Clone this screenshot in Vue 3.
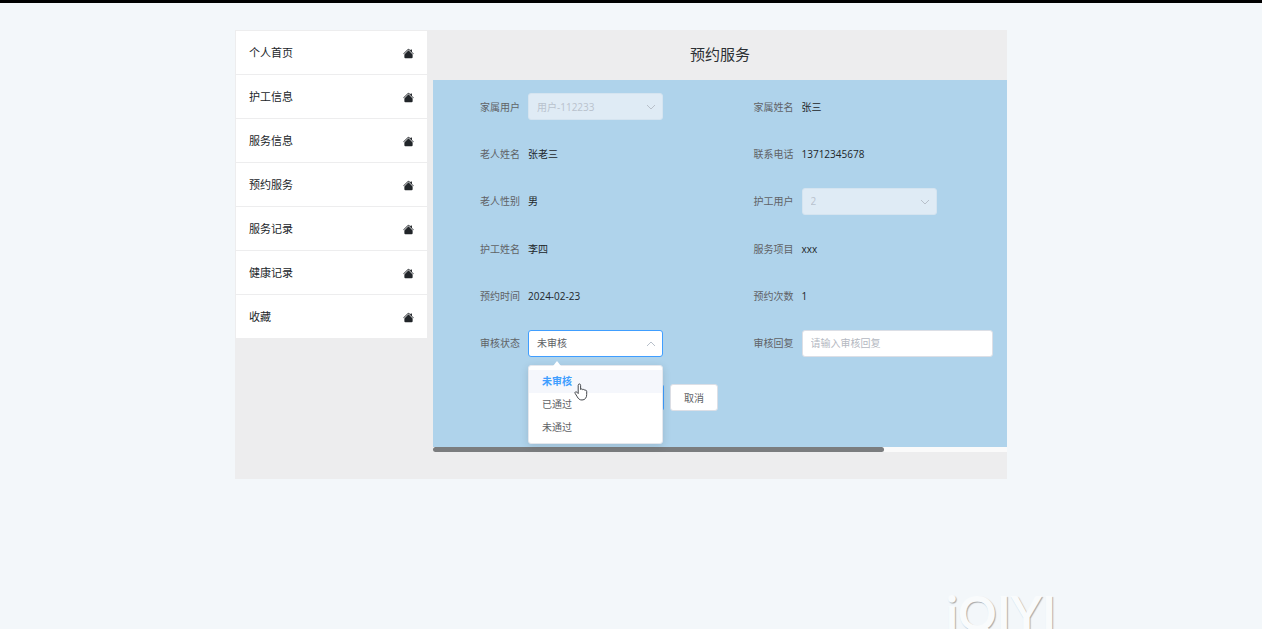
<script setup>
import { ref } from 'vue'

const menu = ['个人首页', '护工信息', '服务信息', '预约服务', '服务记录', '健康记录', '收藏']

const fields = [
  { id: 'family-user', label: '家属用户', type: 'locked', value: '用户-112233' },
  { id: 'family-name', label: '家属姓名', type: 'text', value: '张三' },
  { id: 'elder-name', label: '老人姓名', type: 'text', value: '张老三' },
  { id: 'phone', label: '联系电话', type: 'text', value: '13712345678' },
  { id: 'elder-sex', label: '老人性别', type: 'text', value: '男' },
  { id: 'nurse-user', label: '护工用户', type: 'locked', value: '2' },
  { id: 'nurse-name', label: '护工姓名', type: 'text', value: '李四' },
  { id: 'project', label: '服务项目', type: 'text', value: 'xxx' },
  { id: 'date', label: '预约时间', type: 'text', value: '2024-02-23' },
  { id: 'times', label: '预约次数', type: 'text', value: '1' },
  { id: 'status', label: '审核状态', type: 'status' },
  { id: 'reply', label: '审核回复', type: 'input' }
]

const options = ['未审核', '已通过', '未通过']
const status = ref('未审核')
const reply = ref('')
const open = ref(true)

function choose(option) {
  status.value = option
  open.value = false
}
</script>

<template>
  <div class="page">
    <div class="shell">
      <nav class="side">
        <a v-for="item in menu" :key="item" href="#" class="side-item">
          <span>{{ item }}</span>
          <svg class="house" viewBox="0 0 16 16" aria-hidden="true">
            <path d="M8.707 1.5a1 1 0 0 0-1.414 0L.646 8.146a.5.5 0 0 0 .708.708L8 2.207l6.646 6.647a.5.5 0 0 0 .708-.708L13 5.793V2.5a.5.5 0 0 0-.5-.5h-1a.5.5 0 0 0-.5.5v1.293L8.707 1.5Z" />
            <path d="m8 3.293 6 6V13.5a1.5 1.5 0 0 1-1.5 1.5h-9A1.5 1.5 0 0 1 2 13.5V9.293l6-6Z" />
          </svg>
        </a>
      </nav>

      <main class="main">
        <h1 class="title">预约服务</h1>
        <form class="form" @submit.prevent>
          <div class="fields">
            <div v-for="f in fields" :key="f.id" class="field">
              <label class="label" :for="f.id">{{ f.label }}</label>

              <div v-if="f.type === 'locked'" class="select-box">
                <select :id="f.id" class="control locked" disabled>
                  <option>{{ f.value }}</option>
                </select>
                <svg class="chevron" viewBox="0 0 10 10" aria-hidden="true"><path d="M1 3l4 4 4-4" /></svg>
              </div>

              <div v-else-if="f.type === 'status'" class="select-box">
                <select :id="f.id" v-model="status" class="control active" @mousedown.prevent="open = !open">
                  <option v-for="o in options" :key="o">{{ o }}</option>
                </select>
                <svg class="chevron" viewBox="0 0 10 10" aria-hidden="true"><path d="M1 7l4-4 4 4" /></svg>
                <div v-if="open" class="menu">
                  <ul class="menu-list" role="listbox">
                    <li
                      v-for="o in options"
                      :key="o"
                      role="option"
                      :aria-selected="o === status"
                      :class="['menu-option', { selected: o === status }]"
                      @click="choose(o)"
                    >{{ o }}</li>
                  </ul>
                  <svg class="pointer" viewBox="0 0 14 18" aria-hidden="true">
                    <path d="M4.2 10.6V2.3c0-1.8 2.4-1.8 2.4 0v4.2c.2-.9 2.1-.7 2.2.3.4-.7 2-.4 2.1.6.5-.5 1.8-.2 1.8 1v3.2c0 3-1.6 5.4-4.7 5.4-2.5 0-3.6-1.2-4.7-3.1L1.100 10.300c-.7-1.200.9-2.100 1.800-1.100z" />
                  </svg>
                </div>
              </div>

              <input v-else-if="f.type === 'input'" :id="f.id" v-model="reply" class="control wide" type="text" placeholder="请输入审核回复" />

              <output v-else :id="f.id" class="value">{{ f.value }}</output>
            </div>
          </div>
          <div class="actions">
            <button type="submit" class="btn primary">提交</button>
            <button type="button" class="btn">取消</button>
          </div>
        </form>
        <div class="track"><div class="thumb"></div></div>
      </main>
    </div>
    <div class="watermark" aria-hidden="true">iQIYI</div>
  </div>
</template>

<style>
body {
  background: #f3f7fa;
}
</style>

<style scoped>
.page {
  position: relative;
  box-sizing: border-box;
  min-height: 100vh;
  padding: 27px 20px 0 0;
  border-top: 3px solid #000;
  overflow: hidden;
  background: #f3f7fa;
  color: #212529;
  font-family: "Open Sans", "Noto Sans CJK SC", sans-serif;
  font-size: 10px;
}

.shell {
  display: flex;
  gap: 6px;
  max-width: 772px;
  margin: 0 auto;
  padding-bottom: 27px;
  box-sizing: border-box;
  background: #ededee;
}

.side {
  box-sizing: border-box;
  flex: 0 0 192px;
  display: flex;
  flex-direction: column;
  gap: 1px;
  padding: 1px 0 0 1px;
}

.side-item {
  display: flex;
  align-items: center;
  justify-content: space-between;
  box-sizing: border-box;
  height: 43px;
  padding: 0 13px;
  background: #fff;
  color: #212529;
  font-size: 11px;
  line-height: 16px;
  text-decoration: none;
}

.house {
  width: 11px;
  height: 11px;
  margin-top: 2px;
  fill: #212529;
}

.main {
  flex: 1;
  min-width: 0;
}

.title {
  margin: 0;
  padding: 14px 0 16px;
  color: #2c3034;
  font-size: 15px;
  font-weight: 400;
  line-height: 20px;
  text-align: center;
}

.form {
  padding: 13px 14px 36px 13px;
  background: #afd3eb;
}

.fields {
  display: grid;
  grid-template-columns: 1fr 1fr;
  align-content: space-between;
  min-height: 264px;
}

.field {
  display: flex;
  align-items: center;
  height: 27px;
  line-height: 14px;
}

.label {
  box-sizing: border-box;
  flex: 0 0 82px;
  padding-right: 8px;
  color: #606266;
  text-align: right;
}

.select-box {
  position: relative;
  width: 135px;
}

.control {
  display: block;
  box-sizing: border-box;
  width: 100%;
  height: 27px;
  margin: 0;
  padding: 0 8px;
  border: 1px solid #dcdfe6;
  border-radius: 3px;
  outline: none;
  appearance: none;
  background: #fff;
  color: #606266;
  font: inherit;
}

.control.wide {
  flex: 1;
  width: auto;
  min-width: 0;
}

.control::placeholder {
  color: #b4b8c1;
  opacity: 1;
}

.control.locked {
  border-color: #d5e4f0;
  background: #dfebf5;
  color: #b9c2cd;
  opacity: 1;
}

.control.active {
  border-color: #409eff;
}

.chevron {
  position: absolute;
  top: 9px;
  right: 7px;
  width: 10px;
  height: 10px;
  fill: none;
  stroke: #b8c0ca;
  pointer-events: none;
}

.value {
  color: #212529;
}

.menu {
  position: absolute;
  z-index: 2;
  top: calc(100% + 8px);
  left: 0;
  box-sizing: border-box;
  width: 100%;
  padding: 4px 0;
  border: 1px solid #e4e7ed;
  border-radius: 3px;
  background: #fff;
  box-shadow: 0 2px 9px rgba(0, 0, 0, 0.12);
}

.menu::before {
  content: "";
  position: absolute;
  top: -5px;
  left: 24px;
  border: 4px solid transparent;
  border-top: 0;
  border-bottom: 5px solid #fff;
}

.menu-list {
  margin: 0;
  padding: 0;
  list-style: none;
}

.menu-option {
  padding: 0 13px;
  color: #606266;
  line-height: 23px;
}

.menu-option.selected {
  background: #f5f7fc;
  color: #409eff;
  font-weight: 700;
}

.pointer {
  position: absolute;
  top: 17px;
  left: 45px;
  width: 14px;
  height: 18px;
  fill: #fff;
  stroke: #45484d;
  stroke-linejoin: round;
}

.actions {
  display: flex;
  gap: 6px;
  padding: 27px 0 0 82px;
}

.btn {
  box-sizing: border-box;
  height: 27px;
  padding: 0 13px;
  border: 1px solid #dcdfe6;
  border-radius: 3px;
  background: #fff;
  color: #606266;
  font: inherit;
}

.btn.primary {
  width: 136px;
  border-color: #409eff;
  background: #409eff;
  color: #fff;
}

.track {
  height: 5px;
  background: #fafafa;
}

.thumb {
  width: 78.6%;
  height: 100%;
  border-radius: 3px;
  background: #7b7d7f;
}

.watermark {
  position: absolute;
  right: 206px;
  bottom: -12px;
  color: #f9fbfc;
  font-family: Lato, sans-serif;
  font-size: 48px;
  font-weight: 700;
  line-height: 56px;
  text-shadow: 1px 1px 1px #a5a8ab;
  pointer-events: none;
}
</style>
